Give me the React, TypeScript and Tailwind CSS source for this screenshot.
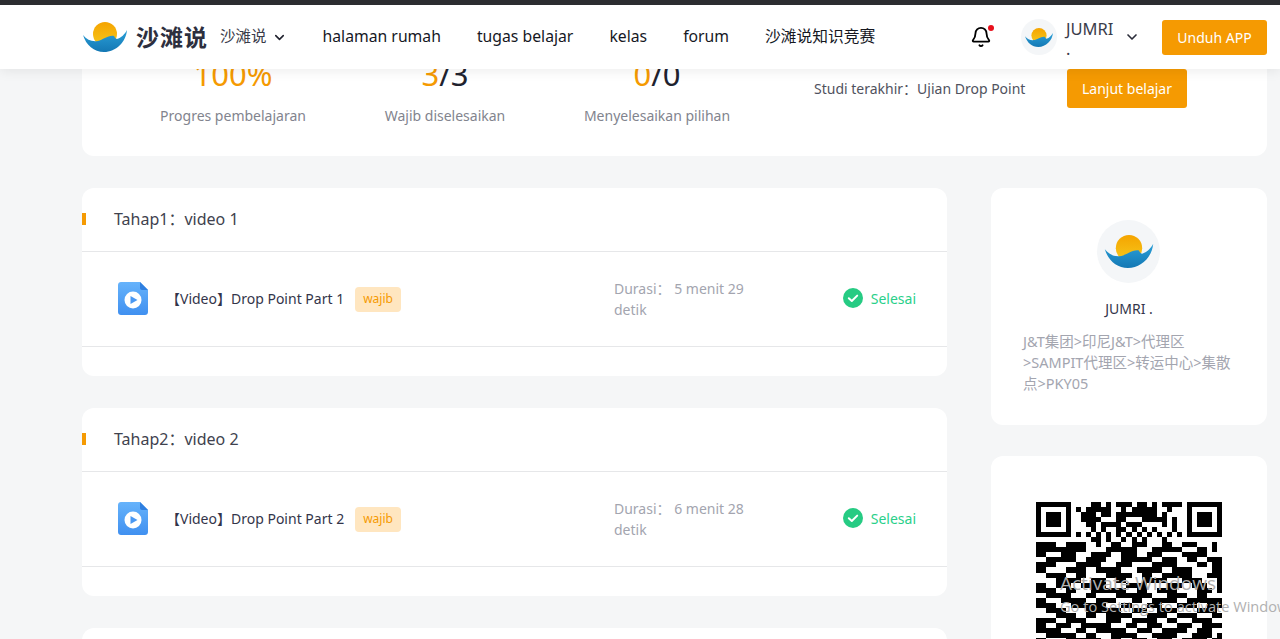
import { Bell, ChevronDown } from "lucide-react";

const font = { fontFamily: '"Noto Sans", "Noto Sans CJK SC", sans-serif' };

const stages = [
  { name: "Tahap1：video 1", title: "【Video】Drop Point Part 1", time: "5 menit 29 detik" },
  { name: "Tahap2：video 2", title: "【Video】Drop Point Part 2", time: "6 menit 28 detik" },
];

const stats = [
  { done: "100%", total: "", label: "Progres pembelajaran" },
  { done: "3", total: "/3", label: "Wajib diselesaikan" },
  { done: "0", total: "/0", label: "Menyelesaikan pilihan" },
];

const qrRows = [
  "1111111000011010111011010111101111111",
  "1000001010111110010111110010001000001",
  "1011101001110110111111110100001011101",
  "1011101001111000110001111101001011101",
  "1011101000110111101110000101001011101",
  "1000001000010100110101010001001000001",
  "1111111010101010101010101010101111111",
  "0000000000011010010101000100000000000",
  "1111001111001001100111000110011100010",
  "1111111111000011111100011111100011010",
  "1100011100011110011100111000011111000",
  "0011111100111100011111100111001100111",
  "1111000011111000111000011111000011011",
  "1100001111001111100011111001111000011",
  "0011110011000011111001100111111000111",
  "0000111110011100110001111100011110001",
  "1100111001111100001111000011100111001",
  "1111001100011111110011001111000011101",
  "0011111000110000111111100011110011000",
  "1100011111001111000110011111001111111",
  "1111000111111100011000111000111100111",
  "0011110000111111100111001111000011110",
  "0000111100110011111000111100111100011",
  "1111001111000011100111110011000111100",
  "1100111001111110001100111000111001111",
  "1111100011001111110011100111110011100",
  "0011111100110001111100011111000111101",
  "1100001111111001100111001110011111011",
];

function Logo({ className }: { className: string }) {
  return (
    <svg viewBox="0 0 44 30" className={className}>
      <defs>
        <linearGradient id="sun" x1="0" y1="0" x2="0" y2="1">
          <stop offset="0" stopColor="#f5a400" />
          <stop offset="1" stopColor="#f6c81c" />
        </linearGradient>
        <linearGradient id="sea" x1="0" y1="0" x2="0" y2="1">
          <stop offset="0" stopColor="#2a9fd8" />
          <stop offset="1" stopColor="#1478b4" />
        </linearGradient>
      </defs>
      <circle cx="22" cy="12" r="12" fill="url(#sun)" />
      <path
        d="M0 13C4 18 9 20 15 19C20 18 25 13 31 14C32 16 33 17 34 17C38 16 42 12 44 8C43 20 33 30 21 30C11 30 3 23 0 13Z"
        fill="url(#sea)"
      />
    </svg>
  );
}

function VideoIcon() {
  return (
    <svg viewBox="0 0 30 33" className="h-[33px] w-[30px] shrink-0">
      <defs>
        <linearGradient id="file" x1="0" y1="0" x2="0" y2="1">
          <stop offset="0" stopColor="#66b3fb" />
          <stop offset="1" stopColor="#4090f0" />
        </linearGradient>
      </defs>
      <path
        d="M3 0H22L30 8V30C30 31.7 28.7 33 27 33H3C1.3 33 0 31.7 0 30V3C0 1.3 1.3 0 3 0Z"
        fill="url(#file)"
      />
      <path d="M22 0L30 8H24C22.9 8 22 7.1 22 6Z" fill="#2f7fe0" />
      <circle cx="15" cy="18" r="8.5" fill="#fff" />
      <path d="M12.5 14L19.5 18L12.5 22Z" fill="#4a98f2" />
    </svg>
  );
}

function CheckIcon() {
  return (
    <svg viewBox="0 0 20 20" className="h-5 w-5 shrink-0">
      <circle cx="10" cy="10" r="10" fill="#26cb83" />
      <path d="M5.8 10.2L8.8 13L14.2 7.6" fill="none" stroke="#fff" strokeWidth="2" strokeLinecap="round" strokeLinejoin="round" />
    </svg>
  );
}

function QrCode() {
  return (
    <svg viewBox="0 0 37 28" className="h-[141px] w-[186px]" shapeRendering="crispEdges">
      {qrRows.map((row, y) =>
        row.split("").map((cell, x) => (cell === "1" ? <rect key={`${x}-${y}`} x={x} y={y} width="1" height="1" fill="#000" /> : null))
      )}
    </svg>
  );
}

function Header() {
  return (
    <header className="relative z-10 flex h-[64px] items-center bg-white pl-[83px] pr-[13px] shadow-[0_2px_12px_rgba(0,0,0,0.08)]">
      <Logo className="h-[30px] w-[44px]" />
      <span className="ml-[9px] text-[23px] font-bold leading-none tracking-[1px] text-[#2d2f3e]">沙滩说</span>
      <div className="ml-[12px] flex items-center gap-[5px] text-[15.5px] text-[#3a3c4a]">
        沙滩说
        <ChevronDown size={15} strokeWidth={2.5} className="text-[#20222e]" />
      </div>
      <nav className="ml-[36px] flex items-center gap-[36px] text-[15.75px] text-[#16181f]">
        <span>halaman rumah</span>
        <span>tugas belajar</span>
        <span>kelas</span>
        <span>forum</span>
        <span>沙滩说知识竞赛</span>
      </nav>
      <div className="relative ml-auto">
        <Bell size={22} strokeWidth={2} className="text-black" />
        <span className="absolute right-[-2px] top-[-1px] h-[6px] w-[6px] rounded-full bg-[#e8101c]" />
      </div>
      <div className="ml-[29px] flex h-[36px] w-[36px] items-center justify-center rounded-full bg-[#f4f6f8]">
        <Logo className="h-[19px] w-[28px]" />
      </div>
      <div className="ml-[9px] mt-[3px] w-[57px] text-[16.5px] leading-[20px] text-[#3a3c4a]">
        JUMRI
        <br />.
      </div>
      <ChevronDown size={16} strokeWidth={2.5} className="ml-[1px] text-[#2b2d3a]" />
      <button className="ml-[22px] h-[35px] w-[105px] rounded-[3px] bg-[#f59a02] text-[14px] text-white">Unduh APP</button>
    </header>
  );
}

function StageCard({ name, title, time }: { name: string; title: string; time: string }) {
  return (
    <section className="rounded-xl bg-white pb-[29px]">
      <div className="relative flex h-[64px] items-center border-b border-[#e6e7e9] pb-[2px] pl-[32px] text-[16px] text-[#40424e]">
        <span className="absolute left-0 h-[12px] w-[4px] bg-[#f59a02]" />
        {name}
      </div>
      <div className="flex h-[95px] items-center border-b border-[#e6e7e9] pb-[2px] pl-[36px] pr-[31px]">
        <VideoIcon />
        <span className="ml-[18px] w-[177px] whitespace-nowrap text-[14px] text-[#33354a]">{title}</span>
        <span className="ml-[12px] mt-[2px] flex h-[25px] w-[46px] items-center justify-center rounded-[4px] bg-[#ffe6c0] text-[12px] text-[#f59a02]">
          wajib
        </span>
        <div className="ml-[213px] mt-[2px] w-[150px] text-[14px] leading-[21px] text-[#a3a5af]">Durasi： {time}</div>
        <div className="ml-auto flex items-center gap-[8px] text-[14px] text-[#2ad08a]">
          <CheckIcon />
          Selesai
        </div>
      </div>
    </section>
  );
}

export default function App() {
  return (
    <div className="relative h-[639px] overflow-hidden bg-[#f5f6f7]" style={font}>
      <div className="relative z-20 h-[5px] bg-[#2c2d30]" />
      <Header />
      <main className="-mt-[20px] pl-[82px] pr-[13px]">
        <div className="flex h-[107px] items-start rounded-b-xl bg-white pl-[45px]">
          {stats.map((s) => (
            <div key={s.label} className="flex w-[212px] flex-col items-center pt-[4px]">
              <div className="h-[42px] text-[31px] leading-[42px] text-[#20222e]">
                <span className="text-[#f59a02]">{s.done}</span>
                {s.total}
              </div>
              <div className="mt-[10px] text-[14px] leading-[21px] text-[#82848e]">{s.label}</div>
            </div>
          ))}
          <div className="ml-[51px] mt-[29px] w-[220px] whitespace-nowrap text-[14px] text-[#50525e]">Studi terakhir：Ujian Drop Point</div>
          <button className="ml-[33px] mt-[20px] h-[39px] w-[120px] shrink-0 rounded-[3px] bg-[#f59a02] text-[14px] text-white">
            Lanjut belajar
          </button>
        </div>
        <div className="mt-[32px] flex items-start gap-[44px]">
          <div className="flex w-[865px] shrink-0 flex-col gap-[32px]">
            {stages.map((s) => (
              <StageCard key={s.name} {...s} />
            ))}
            <section className="h-[60px] rounded-xl bg-white" />
          </div>
          <aside className="flex w-[276px] shrink-0 flex-col gap-[31px]">
            <div className="flex h-[237px] flex-col items-center rounded-xl bg-white px-[32px] pt-[32px]">
              <div className="mr-[1px] flex h-[63px] w-[63px] items-center justify-center rounded-full bg-[#f4f6f8]">
                <Logo className="h-[33px] w-[50px]" />
              </div>
              <div className="mt-[15px] text-[14px] font-normal leading-[21px] text-[#33354a]">JUMRI .</div>
              <div className="mt-[12px] w-full text-[14.5px] leading-[21px] text-[#a3a5af]">
                J&amp;T集团&gt;印尼J&amp;T&gt;代理区&gt;SAMPIT代理区&gt;转运中心&gt;集散点&gt;PKY05
              </div>
            </div>
            <div className="flex h-[300px] justify-center rounded-xl bg-white pt-[46px]">
              <QrCode />
            </div>
          </aside>
        </div>
      </main>
      <div className="pointer-events-none absolute left-[1060px] top-[570px] z-30 whitespace-nowrap text-[#b0b0b0]" style={{ fontFamily: '"Open Sans", sans-serif' }}>
        <div className="text-[19px] leading-[26px]">Activate Windows</div>
        <div className="text-[14.6px] leading-[21px]">Go to Settings to activate Windows.</div>
      </div>
    </div>
  );
}
